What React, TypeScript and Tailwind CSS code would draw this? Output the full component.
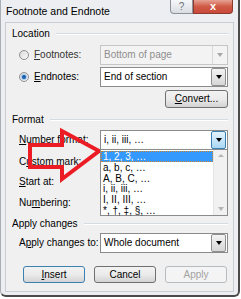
import React from 'react';

const items = ['1, 2, 3, …', 'a, b, c, …', 'A, B, C, …', 'i, ii, iii, …', 'I, II, III, …', '*, †, ‡, §, …'];

const Tri = ({ color = 'border-t-black' }: { color?: string }) => (
  <div className={`w-0 h-0 border-l-[3px] border-r-[3px] border-t-[4px] border-l-transparent border-r-transparent ${color}`} />
);

function Radio({ checked }: { checked?: boolean }) {
  return (
    <div className="w-[10px] h-[10px] rounded-full border border-[#8f8f8f] bg-linear-to-br from-[#d8d8d8] to-[#fbfbfb] flex items-center justify-center">
      {checked && <div className="w-[4px] h-[4px] rounded-full bg-[#1b5ea8] shadow-[0_0_1px_1px_#9cc8ee]" />}
    </div>
  );
}

function Select({ value, disabled, active }: { value: string; disabled?: boolean; active?: boolean }) {
  if (disabled) {
    return (
      <div className="w-[128px] h-[20px] flex items-center border border-[#c6c6c6] bg-[#f3f3f3] text-[#8e8e8e]">
        <span className="flex-1 pl-[3px]">{value}</span>
        <div className="w-[15px] h-full border-l border-[#dadada] flex items-center justify-center">
          <Tri color="border-t-[#a8a8a8]" />
        </div>
      </div>
    );
  }
  return (
    <div className="w-[128px] h-[20px] flex items-center border border-[#8b8b8b] bg-white">
      <span className="flex-1 pl-[3px]">{value}</span>
      <div
        className={`w-[15px] h-[18px] mr-px flex items-center justify-center border rounded-[2px] ${
          active ? 'border-[#3c7fb1] bg-linear-to-b from-[#e4f3fc] to-[#a9d7f5]' : 'border-[#8e8f8f] bg-linear-to-b from-[#f4f4f4] to-[#d6d6d6]'
        }`}
      >
        <Tri />
      </div>
    </div>
  );
}

function Label({ children }: { children: React.ReactNode }) {
  return <div className="w-[81px] pl-[13px] box-content whitespace-nowrap">{children}</div>;
}

function Header({ title, mt }: { title: string; mt: string }) {
  return (
    <div className={`flex items-center h-[12px] pl-[6px] pr-[5px] gap-[6px] ${mt}`}>
      <span>{title}</span>
      <div className="flex-1 h-[2px] border-t border-[#d3dbe3] border-b-white border-b" />
    </div>
  );
}

function Btn({ children, def, disabled }: { children: React.ReactNode; def?: boolean; disabled?: boolean }) {
  return (
    <div
      className={`w-[62px] h-[17px] rounded-[3px] border flex items-center justify-center ${
        disabled
          ? 'border-[#b7bcc0] bg-[#f4f4f4] text-[#a3a3a3]'
          : def
          ? 'border-[#3c7fb1] bg-linear-to-b from-[#f2f2f2] via-[#ebebeb] to-[#d3d3d3]'
          : 'border-[#707070] bg-linear-to-b from-[#f2f2f2] via-[#ebebeb] to-[#d3d3d3]'
      }`}
    >
      {children}
    </div>
  );
}

export default function App() {
  return (
    <div className="w-[241px] h-[299px] bg-white relative overflow-hidden font-['Liberation_Sans',Arial,sans-serif] text-[10px] leading-[12px] text-black">
      <div className="w-[240px] h-[297px] bg-[#eceef1] border-l border-[#a8aeb4] border-r-2 border-b-2 border-r-[#4b4b4b] border-b-[#4b4b4b] rounded-b-[6px] flex flex-col">
        {/* title bar */}
        <div className="h-[22px] flex items-start">
          <div className="pl-[5px] pt-[5px] text-[10.5px] leading-[13px] flex-1">Footnote and Endnote</div>
          <div className="w-[23px] h-[14px] border border-[#8d939a] border-t-0 rounded-bl-[4px] bg-linear-to-b from-[#f6f7f9] to-[#d9dde2] flex items-center justify-center text-[10px] text-[#6b6f74]">?</div>
          <div className="w-[40px] h-[14px] mr-[5px] border border-[#8b3a30] border-t-0 rounded-br-[4px] bg-linear-to-b from-[#e5a193] via-[#cf5a45] to-[#c8493a] flex items-center justify-center text-white text-[11px] leading-[11px] font-bold">x</div>
        </div>

        {/* client */}
        <div className="relative mx-[4px] w-[229px] h-[270px] bg-[#f0f0f0] border border-[#c9ced4]">
          <div className="pt-[5px]">
            <Header title="Location" mt="" />
            <div className="flex items-center h-[20px] mt-[5px]">
              <div className="w-[94px] flex items-center pl-[13px] gap-[5px] text-[#333]">
                <Radio />
                <span><u>F</u>ootnotes:</span>
              </div>
              <Select value="Bottom of page" disabled />
            </div>
            <div className="flex items-center h-[20px] mt-[2px]">
              <div className="w-[94px] flex items-center pl-[13px] gap-[5px]">
                <Radio checked />
                <span><u>E</u>ndnotes:</span>
              </div>
              <Select value="End of section" />
            </div>
            <div className="flex justify-end pr-[5px] mt-[3px]">
              <div className="w-[63px] h-[18px] rounded-[3px] border border-[#707070] bg-linear-to-b from-[#f2f2f2] via-[#ebebeb] to-[#d3d3d3] flex items-center justify-center">
                <span><u>C</u>onvert...</span>
              </div>
            </div>

            <Header title="Format" mt="mt-[6px]" />
            <div className="flex items-center h-[20px] mt-[4px]">
              <Label><u>N</u>umber format:</Label>
              <div className="relative">
                <Select value="i, ii, iii, …" active />
                {/* open list */}
                <div className="absolute left-0 top-[19px] z-10 w-[128px] h-[67px] border border-[#8b8b8b] bg-white flex">
                  <div className="flex-1 flex flex-col pt-px">
                    {items.map((t, i) => (
                      <div
                        key={t}
                        className={`h-[10.8px] leading-[11px] pl-[2px] whitespace-nowrap ${
                          i === 0 ? 'bg-[#3399ff] text-white outline outline-dotted outline-[#c9842f] -outline-offset-1' : ''
                        }`}
                      >
                        {t}
                      </div>
                    ))}
                  </div>
                  <div className="w-[14px] bg-[#f1f1f1] border-l border-[#e4e4e4] flex flex-col items-center justify-between py-[4px]">
                    <div className="w-0 h-0 border-l-[3px] border-r-[3px] border-b-[3px] border-l-transparent border-r-transparent border-b-[#b5b5b5]" />
                    <Tri color="border-t-[#b5b5b5]" />
                  </div>
                </div>
              </div>
            </div>
            <div className="flex items-center h-[20px] mt-[2px]">
              <Label>C<u>u</u>stom mark:</Label>
            </div>
            <div className="flex items-center h-[20px]">
              <Label><u>S</u>tart at:</Label>
            </div>
            <div className="flex items-center h-[20px] mt-px">
              <Label>Nu<u>m</u>bering:</Label>
            </div>

            <Header title="Apply changes" mt="mt-[5px]" />
            <div className="flex items-center h-[20px] mt-[3px]">
              <Label>A<u>p</u>ply changes to:</Label>
              <Select value="Whole document" />
            </div>

            <div className="flex gap-[9px] pl-[17px] mt-[13px]">
              <Btn def><span><u>I</u>nsert</span></Btn>
              <Btn>Cancel</Btn>
              <Btn disabled>Apply</Btn>
            </div>
          </div>
        </div>
      </div>

      {/* red annotation arrow */}
      <svg className="absolute left-0 top-0 pointer-events-none" width="241" height="299" viewBox="0 0 241 299">
        <polygon
          points="30,145 62,145 62,131 99,151 62,179 62,167 30,167"
          fill="none"
          stroke="#ec1c24"
          strokeWidth="4"
          strokeLinejoin="miter"
        />
      </svg>
    </div>
  );
}
